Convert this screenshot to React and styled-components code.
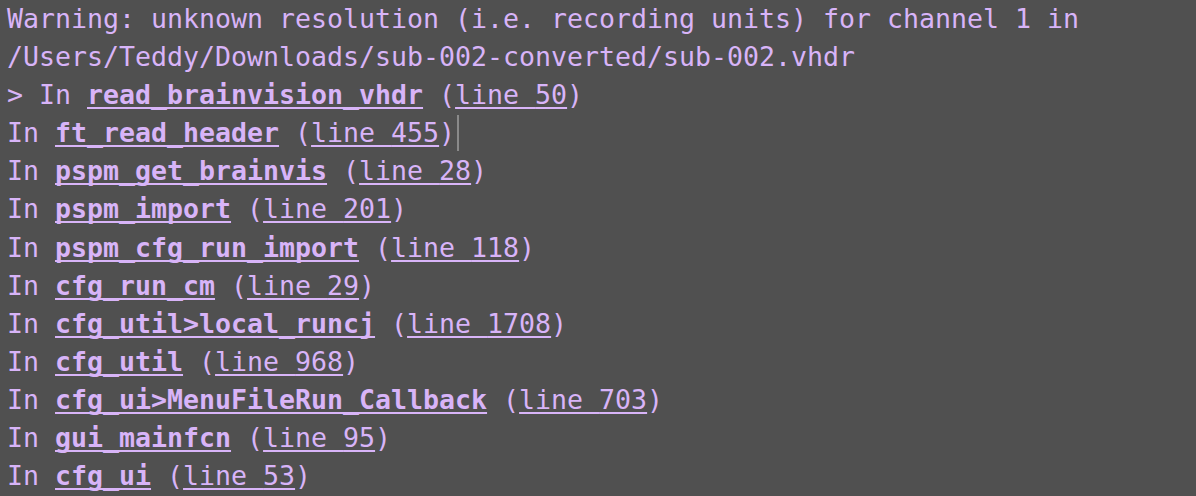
import React from "react";
import styled, { createGlobalStyle } from "styled-components";

const GlobalStyle = createGlobalStyle`
  html, body {
    margin: 0;
    padding: 0;
    background: #505050;
  }
`;

const Console = styled.div`
  width: 1196px;
  height: 496px;
  overflow: hidden;
  box-sizing: border-box;
  padding: 0 0 0 7px;
  background: #505050;
  color: #d8b4f8;
  font-family: "DejaVu Sans Mono", "Liberation Mono", monospace;
  font-size: 26.58px;
  line-height: 38.1px;
  white-space: pre;
`;

const Line = styled.div`
  height: 38.1px;
`;

const Link = styled.span`
  text-decoration: underline;
  text-decoration-thickness: 2px;
  text-underline-offset: 3px;
  text-decoration-skip-ink: none;
  font-weight: ${(p) => (p.$bold ? 700 : 400)};
`;

const Caret = styled.span`
  display: inline-block;
  width: 2px;
  height: 36px;
  margin-left: 2px;
  vertical-align: -9px;
  background: #8a8a8a;
`;

const stack = [
  ["read_brainvision_vhdr", 50],
  ["ft_read_header", 455],
  ["pspm_get_brainvis", 28],
  ["pspm_import", 201],
  ["pspm_cfg_run_import", 118],
  ["cfg_run_cm", 29],
  ["cfg_util>local_runcj", 1708],
  ["cfg_util", 968],
  ["cfg_ui>MenuFileRun_Callback", 703],
  ["gui_mainfcn", 95],
  ["cfg_ui", 53],
];

export default function App() {
  return (
    <>
      <GlobalStyle />
      <Console>
        <Line>Warning: unknown resolution (i.e. recording units) for channel 1 in</Line>
        <Line>/Users/Teddy/Downloads/sub-002-converted/sub-002.vhdr</Line>
        {stack.map(([fn, ln], i) => (
          <Line key={fn}>
            {i === 0 ? "> In " : "In "}
            <Link $bold>{fn}</Link> (<Link>line {ln}</Link>)
            {i === 1 && <Caret />}
          </Line>
        ))}
      </Console>
    </>
  );
}
